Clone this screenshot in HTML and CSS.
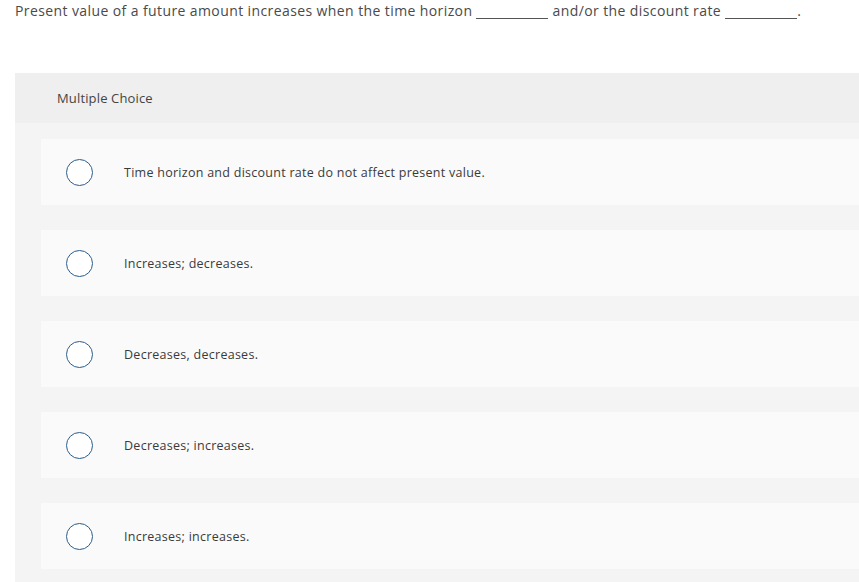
FILE: index.html
```html
<!DOCTYPE html>
<html lang="en">

<head>
    <meta charset="UTF-8">
    <title>Multiple Choice</title>
    <link rel="stylesheet" href="styles.css">
</head>

<body>
    <p class="question">
        Present value of a future amount increases when the time horizon
        <span class="blank"></span> and/or the discount rate <span class="blank"></span>.
    </p>

    <div class="panel">
        <div class="panel-head">Multiple Choice</div>
        <ul class="choices">
            <li class="choice"><span class="radio"></span><span class="label">Time horizon and discount rate do not affect present value.</span></li>
            <li class="choice"><span class="radio"></span><span class="label">Increases; decreases.</span></li>
            <li class="choice"><span class="radio"></span><span class="label">Decreases, decreases.</span></li>
            <li class="choice"><span class="radio"></span><span class="label">Decreases; increases.</span></li>
            <li class="choice"><span class="radio"></span><span class="label">Increases; increases.</span></li>
        </ul>
    </div>
</body>

</html>
```

FILE: styles.css
```css
body {
    margin: 0;
    font-family: "Open Sans", "Liberation Sans", sans-serif;
    color: #4a4a4a;
    background: #fff;
    overflow: hidden;
}

/* 문제 */
.question {
    margin: 0;
    padding: 0 0 0 15px;
    font-size: 14px;
    line-height: 22px;
    letter-spacing: 0.4px;
    white-space: nowrap;
}

.blank {
    display: inline-block;
    width: 72px;
    border-bottom: 1px solid #555;
    vertical-align: -3px;
}

/* 패널 */
.panel {
    margin: 51px 0 0 15px;
    background: #f4f4f4;
}

.panel-head {
    height: 50px;
    padding-left: 42px;
    display: flex;
    align-items: center;
    background: #efefef;
    font-size: 13px;
    letter-spacing: 0.15px;
    color: #444;
}

.choices {
    list-style: none;
    margin: 0;
    padding: 16px 0 20px 26px;
    display: flex;
    flex-direction: column;
    gap: 25px;
}

.choice {
    height: 66px;
    display: flex;
    align-items: center;
    padding-left: 25px;
    background: #fafafa;
}

.radio {
    width: 25px;
    height: 25px;
    border: 1.5px solid #2b5d8c;
    border-radius: 50%;
    background: #fff;
    flex: none;
}

.label {
    margin-left: 31px;
    font-size: 12.5px;
    letter-spacing: 0.27px;
    color: #3a3a3a;
}
```
